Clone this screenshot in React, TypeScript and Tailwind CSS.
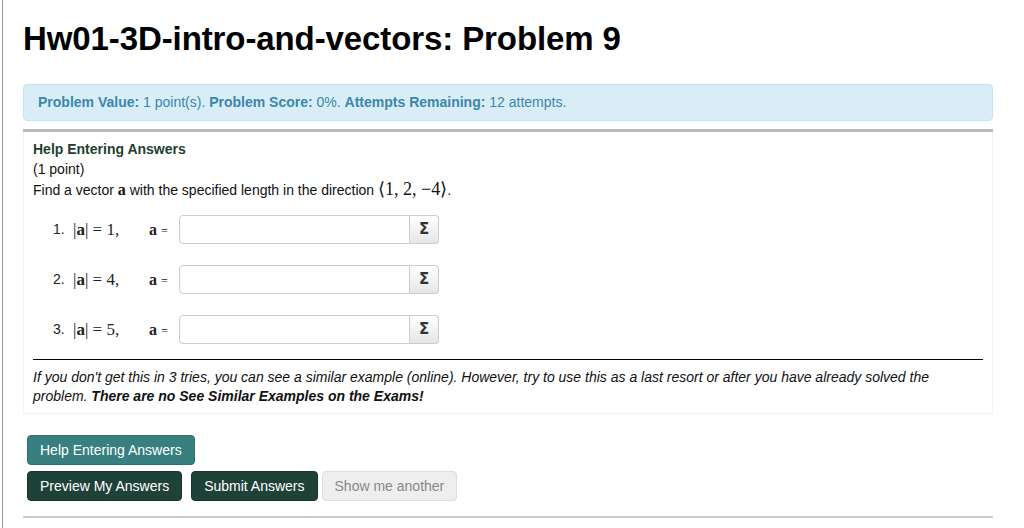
import React from 'react';

const sans = { fontFamily: '"Liberation Sans", Arial, sans-serif' };

const answers = [
  { n: 1, len: 1 },
  { n: 2, len: 4 },
  { n: 3, len: 5 },
];

const AnswerRow: React.FC<{ n: number; len: number }> = ({ n, len }) => (
  <div className="flex items-center h-[29px]">
    <span className="w-[20px] text-[14px] text-[#222]">{n}.</span>
    <span className="w-[76px] font-['Liberation_Serif',serif] text-[17px] text-[#222]">
      |<b>a</b>| = {len},
    </span>
    <span className="w-[30px] font-['Liberation_Serif',serif] text-[16px] text-[#222]">
      <b>a</b> <span className="text-[12px]">=</span>
    </span>
    <div className="flex h-[29px]">
      <input className="w-[231px] h-full border border-[#ccc] rounded-l-[4px] bg-white outline-none" />
      <button className="w-[29px] h-full border border-l-0 border-[#ccc] rounded-r-[4px] bg-gradient-to-b from-white to-[#e6e6e6] text-[15px] font-bold text-[#333] font-['DejaVu_Sans',sans-serif]">
        Σ
      </button>
    </div>
  </div>
);

export default function App() {
  return (
    <div className="flex w-[1024px] h-[528px] bg-white overflow-hidden" style={sans}>
      <div className="w-[2px]" />
      <div className="w-px bg-[#9a9a9a]" />
      <div className="w-[970px] ml-[20px]">
        <h1 className="mt-[20px] text-[33px] leading-[38px] font-bold text-black tracking-[-0.1px]">
          Hw01-3D-intro-and-vectors: Problem 9
        </h1>

        <div className="mt-[26px] h-[37px] flex items-center px-[14px] rounded-[4px] border border-[#bce8f1] bg-[#d9edf7] text-[14px] text-[#3a87ad]">
          <b>Problem Value:</b>&nbsp;1 point(s).&nbsp;<b>Problem Score:</b>&nbsp;0%.&nbsp;
          <b>Attempts Remaining:</b>&nbsp;12 attempts.
        </div>

        <div className="mt-[8px] h-[3px] bg-[#bbbbbb]" />

        <div className="h-[282px] border border-t-0 border-[#f3f3f3] px-[9px] pt-[8px] text-[14px] text-[#111]">
          <div className="font-bold text-[#1e3f33] leading-[19px]">Help Entering Answers</div>
          <div className="leading-[20px]">(1 point)</div>
          <div className="leading-[21px]">
            Find a vector <b className="font-['Liberation_Serif',serif] text-[16px]">a</b> with the specified length in
            the direction{' '}
            <span className="font-['Liberation_Serif',serif] text-[18px]">⟨1, 2, −4⟩</span>.
          </div>

          <div className="mt-[14px] pl-[20px] flex flex-col gap-[21px]">
            {answers.map((a) => (
              <AnswerRow key={a.n} n={a.n} len={a.len} />
            ))}
          </div>

          <div className="mt-[15px] h-px bg-black" />

          <p className="mt-[8px] max-w-[935px] italic leading-[19px] text-[14px] text-[#111]">
            If you don't get this in 3 tries, you can see a similar example (online). However, try to use this as a
            last resort or after you have already solved the problem.{' '}
            <b>There are no See Similar Examples on the Exams!</b>
          </p>
        </div>

        <div className="mt-[21px] pl-[4px]">
          <button className="h-[30px] px-[12px] rounded-[4px] bg-[#38807f] border border-[#2e6e6d] text-white text-[14px]">
            Help Entering Answers
          </button>
          <div className="mt-[6px] flex gap-[9px]">
            <button className="h-[30px] px-[12px] rounded-[4px] bg-[#1f4238] border border-[#183530] text-white text-[14px]">
              Preview My Answers
            </button>
            <div className="flex gap-[4px]">
              <button className="h-[30px] px-[12px] rounded-[4px] bg-[#1f4238] border border-[#183530] text-white text-[14px]">
                Submit Answers
              </button>
              <button className="h-[30px] px-[12px] rounded-[4px] bg-[#eeeeee] border border-[#dddddd] text-[#888] text-[14px]">
                Show me another
              </button>
            </div>
          </div>
        </div>

        <div className="mt-[15px] h-[2px] bg-[#cccccc]" />
      </div>
    </div>
  );
}
